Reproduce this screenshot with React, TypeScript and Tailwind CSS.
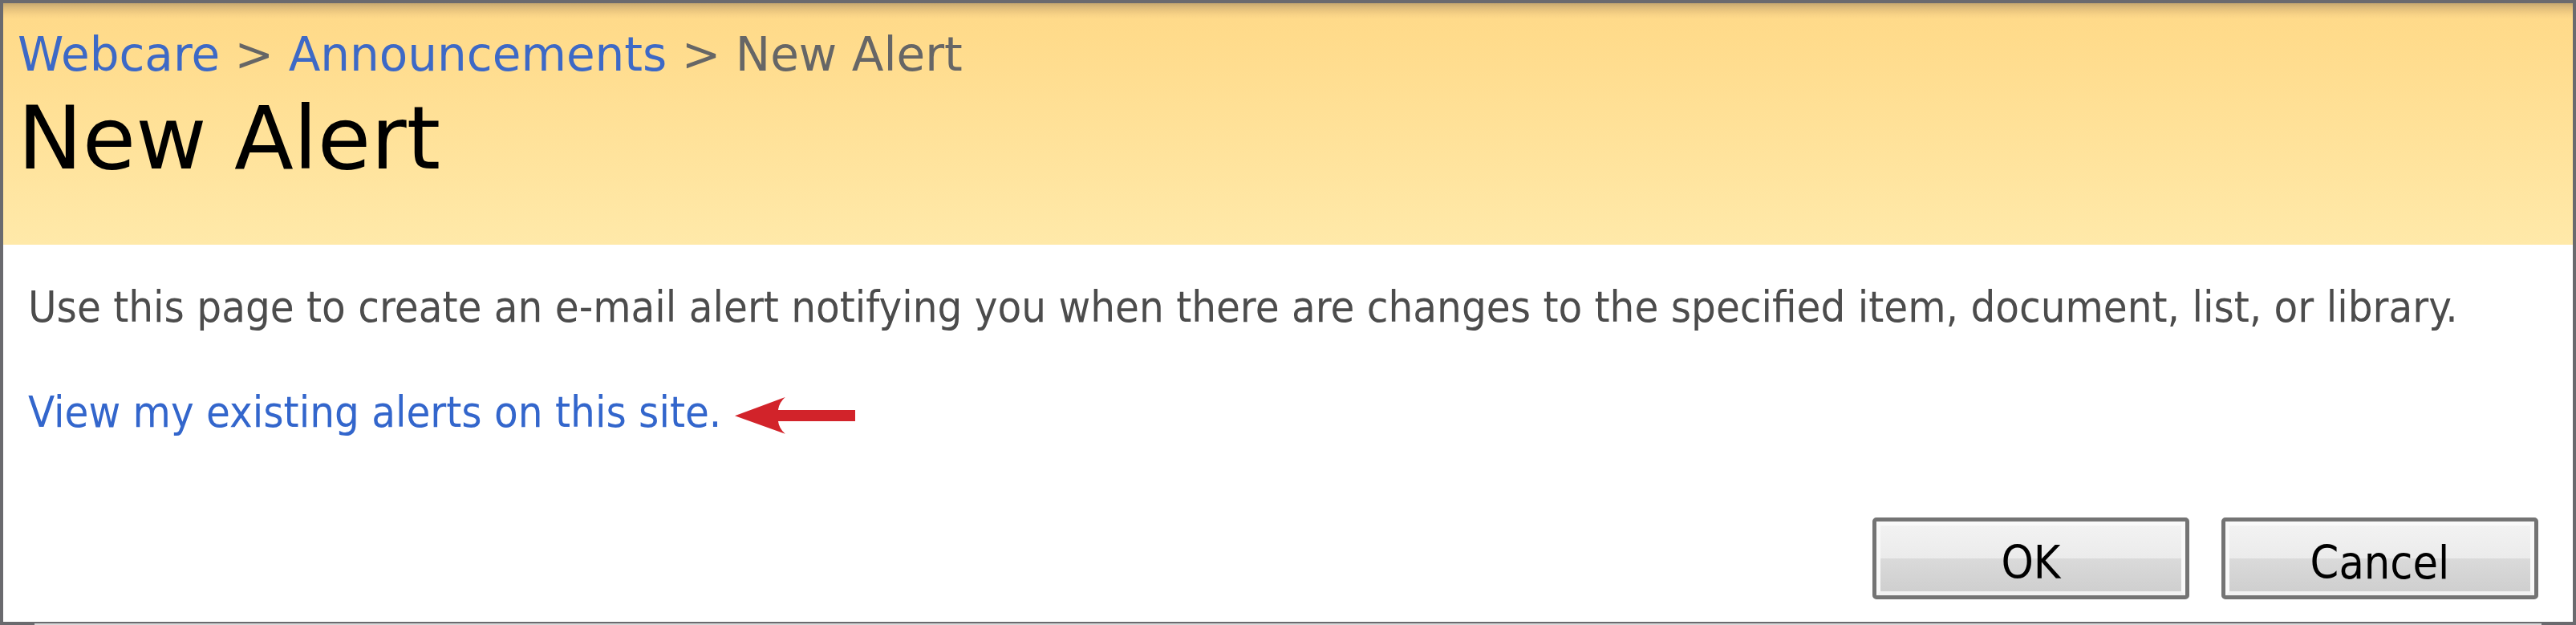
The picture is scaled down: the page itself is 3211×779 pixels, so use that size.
import React from 'react';

const Arrow: React.FC = () => (
  <svg width="160" height="56" viewBox="0 0 160 56" className="ml-[11px] mt-[3px] shrink-0">
    <path d="M6 28.3 L68.7 5 Q61 12 60 21 L156 21 L156 35 L60 35 Q61 44 68.7 50.7 Z" fill="#d2232a" />
  </svg>
);

const PageButton: React.FC<{ label: string }> = ({ label }) => (
  <button className="w-[395px] h-[102px] rounded-[5px] border-[5px] border-[#747474] p-0 cursor-pointer">
    <div className="w-full h-full border-[5px] border-[#f9f9f9] border-b-[#f2f2f2] bg-[linear-gradient(to_bottom,#f2f2f2_0%,#ebebeb_50%,#dadada_50%,#cfcfcf_100%)] flex items-center justify-center pt-[10px]">
      <span className="font-['DejaVu_Sans_Condensed','DejaVu_Sans',sans-serif] text-[57px] leading-[57px] text-black">{label}</span>
    </div>
  </button>
);

export default function App() {
  return (
    <div className="w-[3211px] h-[779px] border-4 border-[#6a6a6e] flex flex-col bg-white">
      {/* Title area */}
      <div className="h-[301px] shrink-0 pl-[18px] pt-[35px] bg-[linear-gradient(to_bottom,#c6a86f_0px,#dcbb7a_5px,#edc880_10px,#f9d487_15px,#ffda8a_20px,#ffdb8b_40px,#ffe9a9_100%)]">
        <div className="font-['DejaVu_Sans',Verdana,sans-serif] text-[58px] leading-[58px] whitespace-nowrap">
          <a className="text-[#3d69c6]">Webcare</a>
          <span className="text-[#666666]"> &gt; </span>
          <a className="text-[#3d69c6]">Announcements</a>
          <span className="text-[#666666]"> &gt; New Alert</span>
        </div>
        <h1 className="mt-[22px] font-['DejaVu_Sans',Verdana,sans-serif] text-[108px] leading-[108px] text-black whitespace-nowrap">
          New Alert
        </h1>
      </div>

      {/* Body */}
      <div className="flex-1 flex flex-col font-['DejaVu_Sans_Condensed','DejaVu_Sans',sans-serif]">
        <p className="mt-[51px] pl-[31px] text-[54px] leading-[54px] text-[#4c4c4c] whitespace-nowrap">
          Use this page to create an e-mail alert notifying you when there are changes to the specified item, document, list, or library.
        </p>
        <div className="mt-[77px] pl-[31px] flex items-start">
          <a className="text-[54px] leading-[54px] text-[#3366cc] whitespace-nowrap cursor-pointer">
            View my existing alerts on this site.
          </a>
          <Arrow />
        </div>
        <div className="mt-[99px] flex justify-end gap-[40px] pr-[43px]">
          <PageButton label="OK" />
          <PageButton label="Cancel" />
        </div>
        <div className="mt-[30px] mx-[39px] h-[3px] bg-[#d8d8d8]" />
      </div>
    </div>
  );
}
